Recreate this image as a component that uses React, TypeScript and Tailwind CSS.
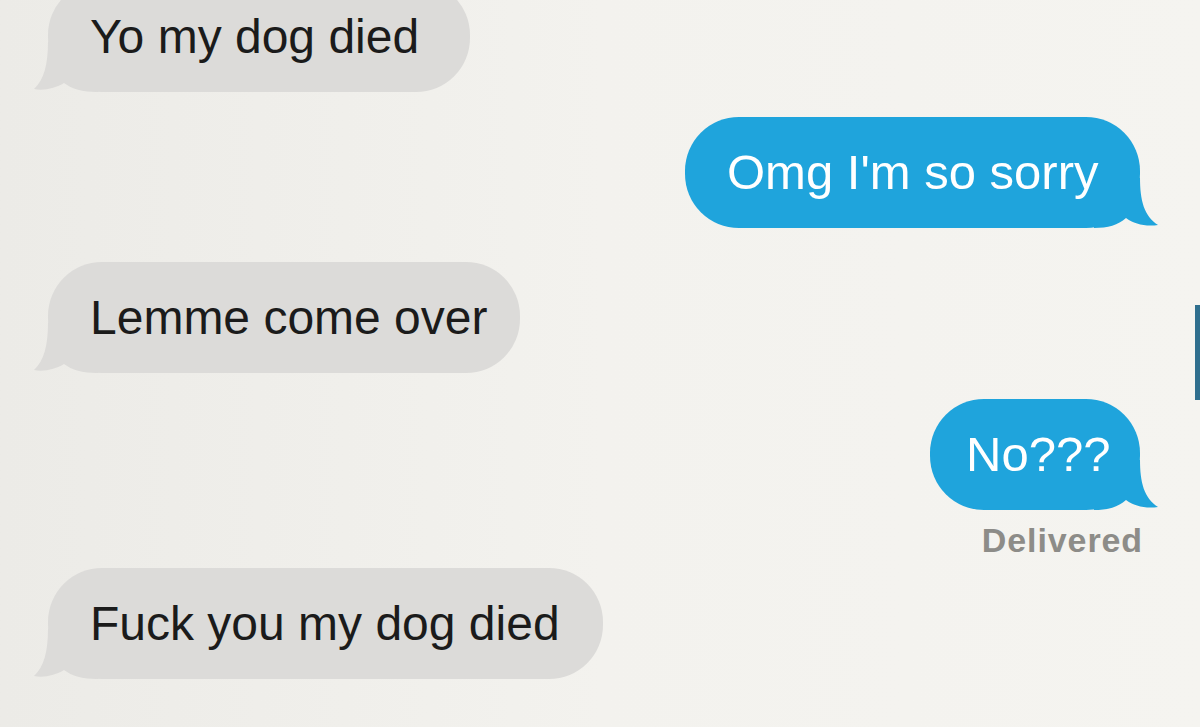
type Side = "in" | "out";

function Tail({ side }: { side: Side }) {
  if (side === "in") {
    return (
      <svg
        className="absolute bottom-0 left-[-14px] h-[50px] w-[64px]"
        viewBox="0 0 64 50"
        aria-hidden="true"
      >
        <path
          d="M14 0 C14 22 10 38 0 47 C10 49 22 46 30 41 C38 47 48 50 64 50 L64 0 Z"
          fill="#dcdbd9"
        />
      </svg>
    );
  }
  return (
    <svg
      className="absolute bottom-0 right-[-18px] h-[50px] w-[64px]"
      viewBox="0 0 64 50"
      aria-hidden="true"
    >
      <path
        d="M46 0 C46 22 50 38 64 47 C52 49 40 46 32 40 C24 47 14 50 0 50 L0 0 Z"
        fill="#1fa4dc"
      />
    </svg>
  );
}

function Bubble({
  side,
  text,
  width,
  className = "",
}: {
  side: Side;
  text: string;
  width: string;
  className?: string;
}) {
  const isIn = side === "in";
  return (
    <div
      className={`relative flex h-[111px] items-center rounded-[54px] ${width} ${className} ${
        isIn
          ? "self-start bg-[#dcdbd9] text-[#1b1b1b] text-[48px]"
          : "self-end bg-[#1fa4dc] text-white text-[49px]"
      }`}
    >
      <Tail side={side} />
      <span className="relative leading-none">{text}</span>
    </div>
  );
}

export default function App() {
  return (
    <div className="relative h-[727px] w-[1200px] overflow-hidden bg-gradient-to-r from-[#ecebe7] via-[#f3f2ee] to-[#f5f4f0] font-['Liberation_Sans',Arial,sans-serif]">
      <div className="flex flex-col pl-[48px] pr-[60px]">
        <Bubble side="in" text="Yo my dog died" width="w-[422px] pl-[42px]" className="mt-[-19px]" />
        <Bubble side="out" text="Omg I'm so sorry" width="w-[455px] pl-[42px]" className="mt-[25px]" />
        <Bubble side="in" text="Lemme come over" width="w-[472px] pl-[42px]" className="mt-[34px]" />
        <Bubble side="out" text="No???" width="w-[210px] pl-[36px]" className="mt-[26px]" />
        <p className="mt-[13px] mr-[-3px] self-end text-[34px] font-bold leading-none tracking-[0.9px] text-[#8d8c88]">
          Delivered
        </p>
        <Bubble side="in" text="Fuck you my dog died" width="w-[555px] pl-[42px]" className="mt-[11px]" />
      </div>
      <div className="absolute right-0 top-[305px] h-[95px] w-[5px] bg-[#2f6f8e]" />
    </div>
  );
}
